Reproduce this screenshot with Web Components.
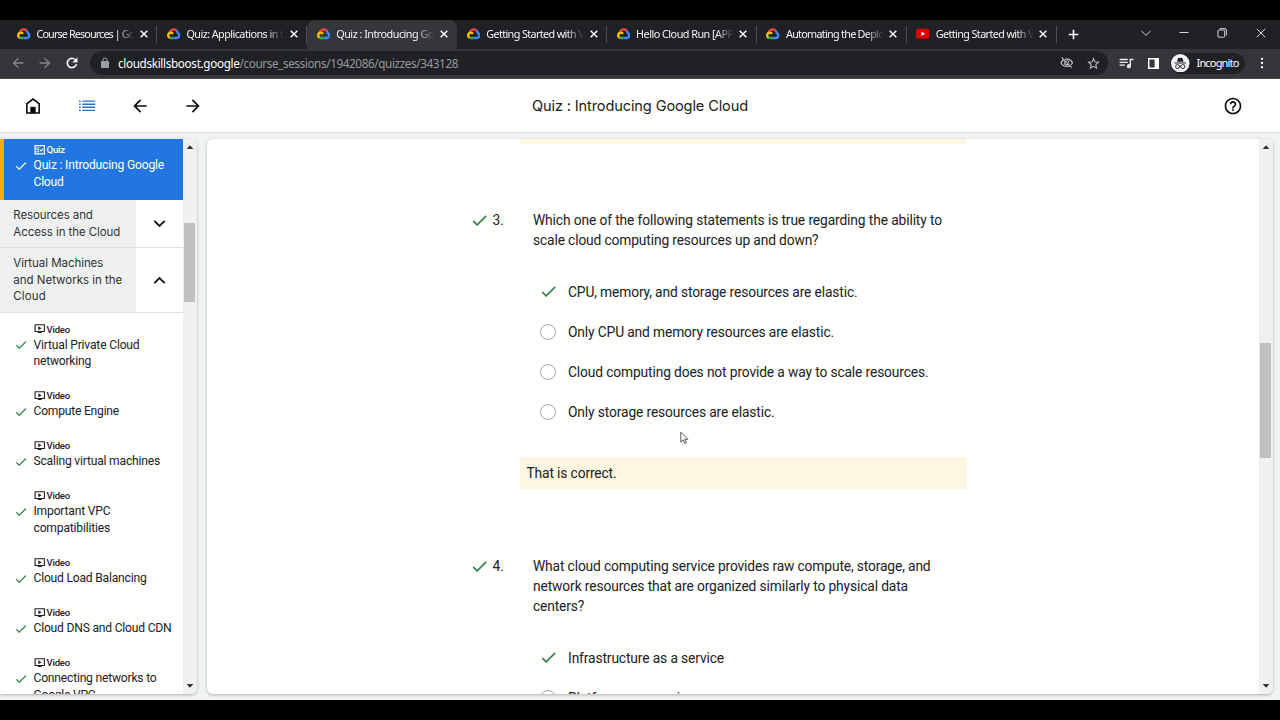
<!DOCTYPE html>
<html lang="en">
<head>
<meta charset="utf-8">
<title>Quiz : Introducing Google Cloud</title>
<style>
html, body { margin: 0; height: 100%; background: #000; overflow: hidden; }
body { font-family: Roboto, "Liberation Sans", sans-serif; color: #202124; }
</style>
</head>
<body>
<app-window></app-window>
<script>
const define = (name, html, setup) => {
  const tpl = document.createElement('template');
  tpl.innerHTML = html;
  customElements.define(name, class extends HTMLElement {
    connectedCallback() {
      if (this.shadowRoot) return;
      const root = this.attachShadow({ mode: 'open' });
      const frag = tpl.content.cloneNode(true);
      if (setup) setup(this, frag);
      root.appendChild(frag);
    }
  });
};

/* A single line of text tracked out or in to a set width. */
customElements.define('fit-line', class extends HTMLElement {
  connectedCallback() {
    if (this.shadowRoot) return;
    const root = this.attachShadow({ mode: 'open' });
    root.innerHTML = '<style>:host{display:block;white-space:pre}span{display:inline-block}</style><span><slot></slot></span>';
    const w = parseFloat(this.getAttribute('w'));
    if (!w) return;
    const span = root.querySelector('span');
    const now = span.getBoundingClientRect().width;
    if (now) span.style.letterSpacing = ((w - now) / this.textContent.length).toFixed(4) + 'px';
  }
});

const ICONS = {
  cloud: ['0 -25 256 256', '<path fill="#ea4335" d="M170.252 56.819l22.253-22.253 1.483-9.37C153.437-11.677 88.976-7.496 52.42 33.92 42.267 45.423 34.734 59.764 30.717 74.573l7.97-1.123 44.505-7.34 3.436-3.513c19.797-21.742 53.27-24.667 76.128-6.168l7.496.39z"/><path fill="#4285f4" d="M224.205 73.918a100.249 100.249 0 0 0-30.217-48.722l-31.232 31.232a55.515 55.515 0 0 1 20.379 44.037v5.544c15.35 0 27.797 12.445 27.797 27.796 0 15.352-12.446 27.485-27.797 27.485h-55.671l-5.466 5.934v33.34l5.466 5.231h55.67c39.93.311 72.553-31.494 72.864-71.424a72.303 72.303 0 0 0-31.793-60.453"/><path fill="#34a853" d="M71.87 205.796h55.593V161.29H71.87a27.275 27.275 0 0 1-11.4-2.498l-7.887 2.42-22.409 22.253-1.952 7.574c12.567 9.489 27.9 14.825 43.647 14.757"/><path fill="#fbbc05" d="M71.87 61.425C31.94 61.664-.237 94.228.001 134.158a72.301 72.301 0 0 0 28.222 56.88l32.248-32.246c-13.99-6.322-20.208-22.786-13.887-36.776 6.32-13.99 22.786-20.208 36.775-13.888a27.796 27.796 0 0 1 13.887 13.888l32.248-32.248A72.224 72.224 0 0 0 71.87 61.425"/>'],
  youtube: ['0 0 24 24', '<rect x="0" y="3.2" width="24" height="17.6" rx="4.5" fill="#e00000"/><path fill="#fff" d="M9.5 8.2v7.6l6.5-3.8z"/>'],
  close: ['0 0 12 12', '<path fill="none" stroke="currentColor" stroke-width="1.7" d="M2 2l8 8M10 2l-8 8"/>'],
  closethin: ['0 0 12 12', '<path fill="none" stroke="currentColor" stroke-width="1" d="M1.8 1.8l8.4 8.400M10.200 1.800l-8.400 8.400"/>'],
  plus: ['0 0 12 12', '<path fill="none" stroke="currentColor" stroke-width="1.8" d="M6 .8v10.4M.8 6h10.4"/>'],
  caret: ['0 0 12 12', '<path fill="none" stroke="currentColor" stroke-width="1" d="M1.5 4l4.5 4.3L10.5 4"/>'],
  min: ['0 0 12 12', '<path fill="none" stroke="currentColor" stroke-width="1" d="M1.5 5.500h9"/>'],
  restore: ['0 0 12 12', '<rect x="1.9" y="3" width="6.8" height="7.2" rx="1" fill="none" stroke="currentColor" stroke-width="1"/><path fill="none" stroke="currentColor" stroke-width="1" d="M3.8 1.6h5.2a1.4 1.4 0 0 1 1.4 1.4v5.4"/>'],
  back: ['0 0 24 24', '<path fill="currentColor" d="M20 11H7.83l5.59-5.59L12 4l-8 8 8 8 1.41-1.41L7.83 13H20v-2z"/>'],
  forward: ['0 0 24 24', '<path fill="currentColor" d="M12 4l-1.41 1.41L16.17 11H4v2h12.17l-5.58 5.59L12 20l8-8z"/>'],
  reload: ['0 0 24 24', '<path fill="currentColor" stroke="currentColor" stroke-width=".4" d="M17.65 6.35A7.958 7.958 0 0 0 12 4c-4.42 0-7.99 3.58-7.99 8s3.57 8 7.99 8c3.73 0 6.84-2.55 7.73-6h-2.08A5.99 5.99 0 0 1 12 18c-3.31 0-6-2.69-6-6s2.69-6 6-6c1.66 0 3.14.69 4.22 1.78L13 11h7V4l-2.35 2.35z"/>'],
  lock: ['0 0 24 24', '<path fill="currentColor" d="M18 8h-1V6c0-2.76-2.24-5-5-5S7 3.24 7 6v2H6c-1.1 0-2 .9-2 2v10c0 1.1.9 2 2 2h12c1.1 0 2-.9 2-2V10c0-1.1-.9-2-2-2zM8.9 6c0-1.71 1.39-3.1 3.1-3.1s3.1 1.39 3.1 3.1v2H8.9V6z"/>'],
  eyeoff: ['0 0 24 24', '<path fill="none" stroke="currentColor" stroke-width="2.1" d="M1.8 12C3.8 7.7 7.6 5.4 12 5.4s8.2 2.3 10.2 6.6c-2 4.3-5.8 6.6-10.2 6.6S3.8 16.3 1.8 12zM3.2 2.6l18 18"/><circle cx="12" cy="12" r="3.6" fill="none" stroke="currentColor" stroke-width="2"/><path stroke="#202124" stroke-width="1.6" d="M5 2.3L22.5 19.8"/>'],
  star: ['0 0 24 24', '<path fill="currentColor" d="M22 9.24l-7.19-.62L12 2 9.19 8.63 2 9.24l5.46 4.73L5.82 21 12 17.27 18.18 21l-1.63-7.03L22 9.24zM12 15.4l-3.76 2.27 1-4.28-3.32-2.88 4.38-.38L12 6.1l1.71 4.04 4.38.38-3.32 2.88 1 4.28L12 15.4z"/>'],
  queue: ['0 0 24 24', '<path fill="currentColor" d="M1 4.500h13v2.200H1zM1 9h13v2.200H1zM1 13.500h8.500v2.200H1zM17 4.500h6v2.400h-3.800V16.300a3.300 3.300 0 1 1-2.200-3.100z"/>'],
  panel: ['0 0 12 12', '<path fill="currentColor" fill-rule="evenodd" d="M0 0h12v12H0zM1.600 1.600v8.800h5.600V1.600z"/>'],
  spy: ['0 0 24 24', '<circle cx="12" cy="12" r="12" fill="#f1f3f4"/><path fill="#202124" d="M7.700 10l1.300-4.600c.2-.6.700-.8 1.300-.6l1.700.5 1.700-.5c.6-.2 1.100 0 1.300.6l1.300 4.600zM4.800 11h14.400v1.300H4.800z"/><g fill="none" stroke="#202124" stroke-width="1.2"><circle cx="8.600" cy="16.300" r="2.600"/><circle cx="15.400" cy="16.300" r="2.600"/><path d="M11.200 15.900q.8-.5 1.600 0"/></g>'],
  dots: ['0 0 24 24', '<g fill="currentColor"><circle cx="12" cy="3.600" r="2.300"/><circle cx="12" cy="12" r="2.300"/><circle cx="12" cy="20.400" r="2.300"/></g>'],
  home: ['0 0 24 24', '<path fill="none" stroke="currentColor" stroke-width="1.900" d="M4.600 9.300L12 3.700l7.400 5.600v11H4.600z"/><path fill="currentColor" d="M8.800 13h6.400v7.500H8.800z"/>'],
  list: ['0 0 24 24', '<path fill="currentColor" d="M2.400 5.400h2v1.900h-2zM2.400 9h2v1.900h-2zM2.400 12.600h2v1.900h-2zM2.400 16.200h2v1.900h-2zM6.400 5.400h15.500v1.600H6.400zM6.400 9.100h15.500v1.600H6.400zM6.400 12.700h15.500v1.600H6.400zM6.400 16.400h15.500v1.600H6.400z"/>'],
  help: ['0 0 24 24', '<path fill="currentColor" d="M11 18h2v-2h-2v2zm1-16C6.480 2 2 6.480 2 12s4.480 10 10 10 10-4.480 10-10S17.520 2 12 2zm0 18c-4.410 0-8-3.590-8-8s3.590-8 8-8 8 3.590 8 8-3.590 8-8 8zm0-14c-2.210 0-4 1.790-4 4h2c0-1.100.9-2 2-2s2 .9 2 2c0 2-3 1.750-3 5h2c0-2.250 3-2.500 3-5 0-2.210-1.790-4-4-4z"/>'],
  check: ['0 0 24 24', '<path fill="currentColor" stroke="currentColor" stroke-width=".25" d="M9 16.170L4.830 12l-1.420 1.410L9 19 21 7l-1.410-1.410z"/>'],
  video: ['0 0 24 24', '<path fill="none" stroke="currentColor" stroke-width="2.300" d="M2.300 3.800h19.400v14H2.300z"/><path fill="currentColor" d="M8 18h8v3H8zM9 6.600v8.400l6.800-4.200z"/>'],
  quiz: ['0 0 24 24', '<path fill="none" stroke="currentColor" stroke-width="2.600" d="M2.300 3.500h19.400v17H2.300z"/><path fill="none" stroke="currentColor" stroke-width="2.200" d="M5 8.500h6M5 12.200h6M5 16h6M12.500 12.200l2.300 2.300 4.700-4.700"/>'],
  chevron: ['0 0 12 12', '<path fill="none" stroke="currentColor" stroke-width="1.700" d="M1.200 3.600L6 8.200l4.800-4.600"/>'],
  tri: ['0 0 8 8', '<path fill="#303030" d="M.7 6L4 2.300 7.300 6z"/>'],
  cursor: ['0 0 12 18', '<path fill="#fff" stroke="#333" stroke-width="1" d="M1 1v12.500l3-2.800 2 4.600 2-.9-2-4.400h4z"/>']
};
define('ui-icon', '<style>:host{display:block;flex:none;width:var(--s,16px);height:var(--s,16px)}svg{display:block;width:100%;height:100%}</style><svg></svg>',
  (el, f) => { const [vb, d] = ICONS[el.getAttribute('name')]; const s = f.querySelector('svg'); s.setAttribute('viewBox', vb); s.innerHTML = d; });

define('browser-tab', `<style>
:host{display:flex;align-items:center;width:149.900px;height:29px;box-sizing:border-box;padding:0 0 1px 9.500px;color:#f2f3f3;font:10.800px/16px "Noto Sans",sans-serif}
:host([active]){background:#35363a;border-radius:8px 8px 0 0}
ui-icon{--s:13.500px}
.t{width:98px;margin:-1px 5.500px 0 6px;overflow:hidden;-webkit-mask:linear-gradient(90deg,#000 80px,transparent 98px);mask:linear-gradient(90deg,#000 80px,transparent 98px)}
.x{--s:10px;color:#fff}
i{margin-left:7.500px;width:1px;height:17px;background:#4b4d50}
:host([active]) i,:host([nosep]) i{visibility:hidden}
</style><ui-icon class="f"></ui-icon><div class="t"><fit-line></fit-line></div><ui-icon class="x" name="close"></ui-icon><i></i>`,
  (el, f) => { f.querySelector('.f').setAttribute('name', el.getAttribute('icon')); const l = f.querySelector('fit-line'); l.textContent = el.getAttribute('label'); l.setAttribute('w', el.getAttribute('w')); });

define('tab-strip', `<style>
:host{display:flex;align-items:center;height:29px;background:#202124;padding-left:7.500px;color:#fff;box-sizing:border-box}
.plus{--s:11px;margin-left:11.500px}.win{display:flex;margin-left:auto;gap:26.200px;padding-right:13.500px;color:#d5d6d7;align-items:center;margin-top:-4px}
.win ui-icon{--s:12px}
</style>
<browser-tab icon="cloud" label="Course Resources | Go" w="98"></browser-tab>
<browser-tab icon="cloud" label="Quiz: Applications in t" w="97"></browser-tab>
<browser-tab icon="cloud" label="Quiz : Introducing Go" w="97.500" active></browser-tab>
<browser-tab icon="cloud" label="Getting Started with V" w="98"></browser-tab>
<browser-tab icon="cloud" label="Hello Cloud Run [APP" w="97.500"></browser-tab>
<browser-tab icon="cloud" label="Automating the Deplo" w="98"></browser-tab>
<browser-tab icon="youtube" label="Getting Started with V" w="98"></browser-tab>
<ui-icon class="plus" name="plus"></ui-icon>
<div class="win"><ui-icon name="caret"></ui-icon><ui-icon name="min"></ui-icon><ui-icon name="restore"></ui-icon><ui-icon name="closethin"></ui-icon></div>`);

define('tool-bar', `<style>
:host{display:flex;align-items:center;height:30px;background:#35363a;box-sizing:border-box;padding:0 12px 1px 10px;color:#fff;border-bottom:1px solid #48494c;font:11.700px/16px "Noto Sans",sans-serif}
.nav{--s:16px;color:#86888b}.fw{margin-left:11px}.rl{margin-left:10.500px;color:#fff}
.box{display:flex;align-items:center;width:1018px;height:23.500px;margin-left:10.500px;background:#202124;border-radius:12px;box-sizing:border-box;padding:0 7.500px 0 8.500px}
.lock{--s:12px;color:#9aa0a6;margin-right:7.500px}.p{color:#969a9e}
.eye{--s:13.500px;margin-left:auto;color:#c3c6c9}.star{--s:15px;margin-left:12px;color:#c3c6c9}
.q{--s:15px;margin-left:10.500px;color:#e8eaed}.pn{--s:11px;margin-left:14px}
.chip{display:flex;align-items:center;gap:7px;height:21px;width:75px;margin-left:11.500px;background:#202124;border-radius:11px;font-size:11px}
.chip ui-icon{--s:18.500px;margin-left:1px}.d{--s:12px;margin-left:auto}
</style>
<ui-icon class="nav" name="back"></ui-icon><ui-icon class="nav fw" name="forward"></ui-icon><ui-icon class="nav rl" name="reload"></ui-icon>
<div class="box"><ui-icon class="lock" name="lock"></ui-icon><fit-line w="121.500">cloudskillsboost.google</fit-line><fit-line class="p" w="218.500">/course_sessions/1942086/quizzes/343128</fit-line><ui-icon class="eye" name="eyeoff"></ui-icon><ui-icon class="star" name="star"></ui-icon></div>
<ui-icon class="q" name="queue"></ui-icon><ui-icon class="pn" name="panel"></ui-icon>
<div class="chip"><ui-icon name="spy"></ui-icon><fit-line w="42">Incognito</fit-line></div><ui-icon class="d" name="dots"></ui-icon>`);

define('page-header', `<style>
:host{display:grid;grid-template-columns:1fr auto 1fr;align-items:center;height:54px;box-sizing:border-box;background:#fffffd;border-bottom:1px solid #dadfe6;color:#0c0c0c}
.l{display:flex;gap:33.400px;padding-left:23.200px}ui-icon{--s:20px}.l ui-icon:nth-child(2){color:#2a72c4}
fit-line{font:14.600px/20px Inter,sans-serif;color:#202124;padding-top:1px}
.r{justify-self:end;margin-right:36.800px}
</style><div class="l"><ui-icon name="home"></ui-icon><ui-icon name="list"></ui-icon><ui-icon name="back"></ui-icon><ui-icon name="forward"></ui-icon></div><fit-line w="216">Quiz : Introducing Google Cloud</fit-line><ui-icon class="r" name="help"></ui-icon>`);

define('scroll-bar', `<style>
:host{display:flex;flex-direction:column;align-items:center;flex:none;width:14px;background:#f0f0ee;box-sizing:border-box;padding:4px 1px 4px 0}
ui-icon{--s:8px}.dn{transform:rotate(180deg);margin-top:auto}
.th{width:11px;background:#c0c0c0}
</style><ui-icon name="tri"></ui-icon><div class="th"></div><ui-icon class="dn" name="tri"></ui-icon>`,
  (el, f) => { const t = f.querySelector('.th'); t.style.marginTop = el.getAttribute('top') + 'px'; t.style.height = el.getAttribute('size') + 'px'; });

define('lesson-item', `<style>
:host{display:block;padding:8.600px 0 9.730px 15px;color:#202124;font:12.100px/16.670px Roboto,sans-serif}
:host([active]){background:#2176e2;color:#fff;border-left:4px solid #f5ab0a;padding-left:11px}
.k{display:flex;align-items:center;height:15px;margin-left:18.500px;gap:1.500px;font:500 9.600px/15px Roboto,sans-serif}
.k ui-icon{--s:11.500px}.b{display:flex}.c{--s:14px;color:#2a7a41;margin:1.800px 5.500px 0 -1px}
:host([active]) .c{color:#fff}
</style><div class="k"><ui-icon class="ki"></ui-icon><fit-line class="kt"></fit-line></div><div class="b"><ui-icon class="c" name="check"></ui-icon><div><slot></slot></div></div>`,
  (el, f) => { const q = el.hasAttribute('active'); f.querySelector('.ki').setAttribute('name', q ? 'quiz' : 'video'); const k = f.querySelector('.kt'); k.textContent = q ? 'Quiz' : 'Video'; k.setAttribute('w', q ? 18.5 : 23.5); });

define('module-row', `<style>
:host{display:flex;border-bottom:1px solid #dde1e4;background:#fffffd;font:11.500px/16.670px Inter,sans-serif;color:#303336}
.n{width:136px;box-sizing:border-box;background:#eef1f0;padding:6.900px 0 6.400px 13.300px}
:host([open]) .n{padding-bottom:7px}
.c{flex:1;display:grid;place-items:center;color:#111}ui-icon{--s:13px}
:host([open]) ui-icon{transform:rotate(180deg)}
</style><div class="n"><slot></slot></div><div class="c"><ui-icon name="chevron"></ui-icon></div>`);

define('side-nav', `<style>
:host{display:flex;width:197px;height:555px;overflow:hidden;background:#fffffd;border-radius:0 6px 6px 0;box-shadow:0 1px 3px #a9b1b5}
.list{width:183px;height:555px;overflow:hidden}.in{margin-top:-5.200px}
</style><div class="list"><div class="in">
<lesson-item active><fit-line w="130.500">Quiz : Introducing Google</fit-line><fit-line w="30">Cloud</fit-line></lesson-item>
<module-row><fit-line w="79.500">Resources and</fit-line><fit-line w="107">Access in the Cloud</fit-line></module-row>
<module-row open><fit-line w="90">Virtual Machines</fit-line><fit-line w="109">and Networks in the</fit-line><fit-line w="32.500">Cloud</fit-line></module-row>
<lesson-item><fit-line w="106">Virtual Private Cloud</fit-line><fit-line w="57.500">networking</fit-line></lesson-item>
<lesson-item><fit-line w="85.500">Compute Engine</fit-line></lesson-item>
<lesson-item><fit-line w="126.500">Scaling virtual machines</fit-line></lesson-item>
<lesson-item><fit-line w="77">Important VPC</fit-line><fit-line w="76.500">compatibilities</fit-line></lesson-item>
<lesson-item><fit-line w="113">Cloud Load Balancing</fit-line></lesson-item>
<lesson-item><fit-line w="138">Cloud DNS and Cloud CDN</fit-line></lesson-item>
<lesson-item><fit-line w="123">Connecting networks to</fit-line><fit-line w="62">Google VPC</fit-line></lesson-item>
</div></div><scroll-bar top="71.500" size="79"></scroll-bar>`);

define('answer-option', `<style>
:host{display:flex;align-items:center;height:40px}
.m{width:16px;height:16px;margin:0 12px 0 8px;display:flex;align-items:center;justify-content:center}
.o{flex:none;width:14.500px;height:14.500px;border:1.300px solid #a3a5a5;border-radius:50%}
ui-icon{--s:19px;color:#35804a}
:host([correct]) .o,:host(:not([correct])) ui-icon{display:none}
</style><div class="m"><div class="o"></div><ui-icon name="check"></ui-icon></div><slot></slot>`);

define('quiz-question', `<style>
:host{display:grid;grid-template-columns:62px 447px;margin-left:264px;font:13.800px/20px Roboto,sans-serif;color:#202124}
.h{display:flex}.h ui-icon{--s:19px;color:#35804a;margin:.5px 3.500px 0 -1px}
.opts{grid-column:1/3;margin:21.600px 0 0 61px}
.fb{grid-column:2;margin:25px 0 67.400px -13.500px;width:440px;height:32px;line-height:33px;padding-left:7px;background:#fdf6e0}
</style><div class="h"><ui-icon name="check"></ui-icon><fit-line class="n" w="11.500"></fit-line></div><div><slot name="text"></slot></div><div class="opts"><slot></slot></div><div class="fb"><fit-line w="90">That is correct.</fit-line></div>`,
  (el, f) => { f.querySelector('.n').textContent = el.getAttribute('n'); });

define('quiz-card', `<style>
:host{display:flex;width:1066px;height:555px;overflow:hidden;background:#fffffd;border-radius:6px;box-shadow:0 1px 3px #a9b1b5}
.b{flex:1;height:555px;overflow:hidden}.prev{width:447px;height:5px;margin:0 0 66.400px 313px;background:#fdf8e4}
</style><div class="b"><div class="prev"></div>
<quiz-question n="3."><div slot="text"><fit-line w="409">Which one of the following statements is true regarding the ability to</fit-line><fit-line w="285.500">scale cloud computing resources up and down?</fit-line></div>
<answer-option correct><fit-line w="289.500">CPU, memory, and storage resources are elastic.</fit-line></answer-option>
<answer-option><fit-line w="266">Only CPU and memory resources are elastic.</fit-line></answer-option>
<answer-option><fit-line w="360.500">Cloud computing does not provide a way to scale resources.</fit-line></answer-option>
<answer-option><fit-line w="206.500">Only storage resources are elastic.</fit-line></answer-option></quiz-question>
<quiz-question n="4."><div slot="text"><fit-line w="397.500">What cloud computing service provides raw compute, storage, and</fit-line><fit-line w="375">network resources that are organized similarly to physical data</fit-line><fit-line w="51">centers?</fit-line></div>
<answer-option correct><fit-line w="156">Infrastructure as a service</fit-line></answer-option>
<answer-option><fit-line w="126">Platform as a service</fit-line></answer-option></quiz-question>
</div><scroll-bar top="191.500" size="115"></scroll-bar>`);

define('app-window', `<style>
:host{display:flex;flex-direction:column;width:1280px;height:680px;margin-top:20px;position:relative}
main{display:flex;gap:10px;height:567px;box-sizing:border-box;padding-top:6px;background:#eff3f4}
.cur{position:absolute;left:680px;top:411px;width:9.500px;height:15px}
</style><tab-strip></tab-strip><tool-bar></tool-bar><page-header></page-header><main><side-nav></side-nav><quiz-card></quiz-card></main><ui-icon class="cur" name="cursor"></ui-icon>`);
</script>
</body>
</html>
